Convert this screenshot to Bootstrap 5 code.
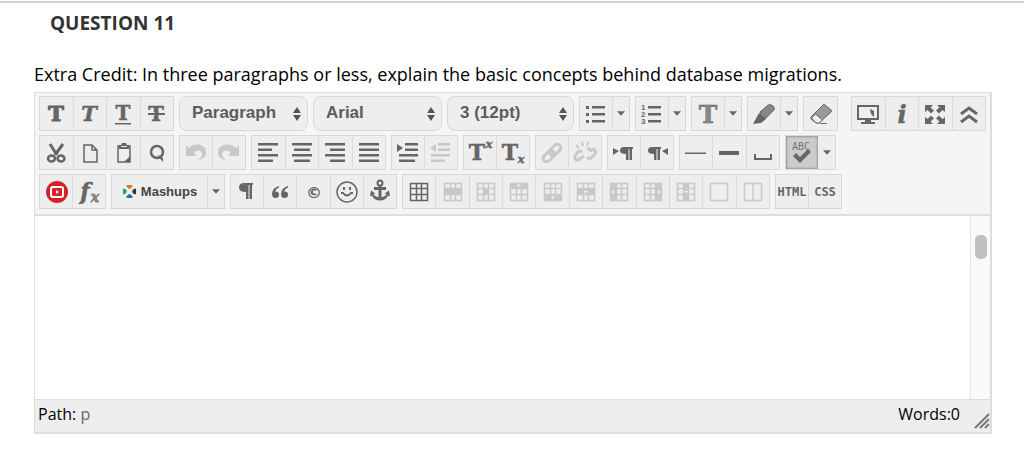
<!DOCTYPE html>
<html lang="en">
<head>
<meta charset="utf-8">
<meta name="viewport" content="width=device-width, initial-scale=1">
<title>Question 11</title>
<link href="https://cdn.jsdelivr.net/npm/bootstrap@5.3.0/dist/css/bootstrap.min.css" rel="stylesheet">
<style>
body{font-family:"Open Sans",sans-serif;color:#000;background:#fff}
.question{border-top:2px solid #d2d2d2;padding:0 32px 0 34px;margin-top:1px}
.question h1{font-size:19px;line-height:26px;font-weight:700;color:#333;margin:7px 0 25px 16px}
.prompt{font-size:18px;line-height:26px;margin:0 0 5px}
.editor{border:2px solid #ddd;border-top-width:1px;border-left-width:1px}
.tools{background:#f5f5f5;padding:3px 4px 5px;border-bottom:2px solid #ddd}
.rowline{display:flex;gap:5px;margin-bottom:4px}
.rowline:last-child{margin-bottom:0}
.grp{display:flex;border:1px solid #d8d8d8;background:#eee;height:35px;flex:none}
.grp button{flex:1 1 0;min-width:0;padding:0;border:0;border-left:1px solid #dcdcdc;border-radius:0;background:none;display:flex;align-items:center;justify-content:center;color:#666;line-height:1}
.grp button:first-child{border-left:0}
.grp button svg{width:32px;height:32px;flex:none;fill:currentColor;overflow:visible}
.grp button:disabled{color:#c8c8c8;opacity:1}
.g1{width:35px}.g2{width:67px}.g3{width:101px}.g4{width:135px}.g5{width:167px}.g11{width:368px}
.split{width:51px}
.grp button.caret{flex:0 0 17px}
.grp button.caret svg{width:8px;height:5px}
.mash{width:114px}
.mash .label{font:bold 13px "Liberation Sans",Arial,sans-serif;color:#444}
.mash button svg.logo{width:15px;height:15px;margin-right:4px}
.grp button.pressed{background:#ccc;box-shadow:inset 0 0 2px 1px #999}
.tools .form-select{width:129px;height:35px;flex:none;border:1px solid #d8d8d8;border-radius:8px;background-color:#eee;color:#5c5c5c;font:bold 17px "Liberation Sans",Arial,sans-serif;padding:0 20px 3px 12px;background-image:url("data:image/svg+xml,%3Csvg xmlns='http://www.w3.org/2000/svg' viewBox='0 0 8 16'%3E%3Cpath fill='%23555' d='M4 1 8 7H0zM4 15 0 9h8z'/%3E%3C/svg%3E");background-size:8px 16px;background-position:right 6px center}
.tools .form-select.size{width:127px}
.slab{font-family:"DejaVu Serif",serif;font-weight:bold;text-anchor:middle;stroke:currentColor;stroke-width:.5px}
.mono{font:bold 12px "DejaVu Sans Mono",monospace}
.line{fill:none;stroke:currentColor}
.area textarea{flex:1;height:183px;border:0;border-radius:0;resize:none;box-shadow:none}
.scroller{width:20px;background:#fafafa;border-left:1px solid #e4e4e4;padding:19px 0 0 4px}
.scroller span{display:block;width:12px;height:24px;border-radius:5px;background:#c1c1c1}
.status{border-top:1px solid #ddd;background:#eee;height:33px;font-size:16px;line-height:28px;padding:0 0 0 3px}
.status a{color:#666;text-decoration:none}
.status svg{width:16px;height:16px;margin:13px 0 0 14px}
</style>
</head>
<body>
<svg class="d-none" aria-hidden="true">
<symbol id="caret" viewBox="0 0 9 5"><path d="M0 0h9L4.500 5z"/></symbol>
<symbol id="grid" viewBox="0 0 32 32"><path class="line" stroke-width="1.500" d="M7.500 7.500h17v17h-17zM7.500 12.500h17M7.500 18.500h17M13.500 7.500v17M18.500 7.500v17"/></symbol>
<symbol id="bars" viewBox="0 0 32 32"><path d="M6 6h20v2.500H6zM6 17h20v2.500H6z"/></symbol>
</svg>
<main class="question">
<h1>QUESTION 11</h1>
<p class="prompt">Extra Credit: In three paragraphs or less, explain the basic concepts behind database migrations.</p>
<section class="editor">
<div class="tools" role="toolbar" aria-label="Text editor">
<div class="rowline">
 <div class="grp g4">
  <button title="Bold"><svg viewBox="0 0 32 32"><text class="slab" x="16" y="23" font-size="21" style="stroke-width:1.200px">T</text></svg></button>
  <button title="Italic"><svg viewBox="0 0 32 32"><text class="slab" x="15" y="23" font-size="21" font-style="italic">T</text></svg></button>
  <button title="Underline"><svg viewBox="0 0 32 32"><text class="slab" x="16" y="22" font-size="20">T</text><path d="M8 25h16v1.500H8z"/></svg></button>
  <button title="Strikethrough"><svg viewBox="0 0 32 32"><text class="slab" x="15" y="23" font-size="21">T</text><path d="M7 14h17v4H7z" fill="#eee"/><path d="M7 15h17v2H7z"/><path d="M13.500 14h4v4h-4z"/></svg></button>
 </div>
 <select class="form-select" aria-label="Format"><option>Paragraph</option></select>
 <select class="form-select" aria-label="Font family"><option>Arial</option></select>
 <select class="form-select size" aria-label="Font size"><option>3 (12pt)</option></select>
 <div class="grp split">
  <button title="Bullet list"><svg viewBox="0 0 32 32"><path d="M6 8h3v3H6zM6 15h3v3H6zM6 22h3v3H6zM12 8h13v2.500H12zM12 15h13v2.500H12zM12 22h13v2.500H12z"/></svg></button>
  <button class="caret" title="Bullet styles"><svg><use href="#caret"/></svg></button></div>
 <div class="grp split">
  <button title="Numbered list"><svg viewBox="0 0 32 32"><path d="M12 8h13v2.500H12zM12 15h13v2.500H12zM12 22h13v2.500H12z"/><g font-family="Liberation Sans" font-weight="bold" font-size="8"><text x="5" y="12">1</text><text x="5" y="19">2</text><text x="5" y="26">3</text></g></svg></button>
  <button class="caret" title="Number styles"><svg><use href="#caret"/></svg></button></div>
 <div class="grp split">
  <button title="Text color"><svg viewBox="0 0 32 32"><text class="slab" x="16" y="25" font-size="25" fill="#888">T</text></svg></button>
  <button class="caret" title="More text colors"><svg><use href="#caret"/></svg></button></div>
 <div class="grp split">
  <button title="Highlight color"><svg viewBox="0 0 32 32"><path d="m12 14 8-7q3-1 5 1t1 4l-8 8-4 .500z" fill="#888" stroke="#666"/><path d="m11 15 7 6-5 4-8 1z"/></svg></button>
  <button class="caret" title="More highlight colors"><svg><use href="#caret"/></svg></button></div>
 <div class="grp g1"><button title="Remove formatting"><svg viewBox="0 0 32 32"><path d="m6 19 12-12q1-1 2 0l6 5q1 1 0 2L14 25H11l-5-4z" fill="#999" stroke="#666"/><path d="m6.500 20 4-4 7 6-3.500 3h-3z" fill="#eee" stroke="#666"/><path d="M15 25h7v1h-7z"/></svg></button></div>
 <div class="grp g4 ms-auto">
  <button title="Preview"><svg viewBox="0 0 32 32"><path class="line" stroke-width="2" d="M6 8h20v13H6z"/><path d="M13 21h6v3h4v2H9v-2h4zM18 11l4 2v6l-3-3z"/></svg></button>
  <button title="Help"><svg viewBox="0 0 32 32"><text class="slab" x="16" y="25" font-size="24" font-style="italic">i</text></svg></button>
  <button title="Full screen"><svg viewBox="0 0 32 32"><path d="M6 7h8l-2.500 2.500 3.500 3-3 3-3.500-3.500L6 14zM26 7h-8l2.500 2.500-3.500 3 3 3 3.500-3.500L26 14zM6 26h8l-2.500-2.500 3.500-3-3-3L8.500 21 6 19zM26 26h-8l2.500-2.500-3.500-3 3-3 3.500 3.500L26 19z"/></svg></button>
  <button title="Show fewer"><svg viewBox="0 0 32 32"><path class="line" stroke-width="3" d="m8 16 8-6 8 6M8 24l8-6 8 6"/></svg></button>
 </div>
</div>
<div class="rowline">
 <div class="grp g4">
  <button title="Cut"><svg viewBox="0 0 32 32"><path class="line" stroke-width="3" d="M10 7l7 11M23 7l-8 11"/><g class="line" stroke-width="2.500"><ellipse cx="11.500" cy="21.500" rx="3.500" ry="3"/><ellipse cx="21" cy="21.500" rx="3.500" ry="3"/></g></svg></button>
  <button title="Copy"><svg viewBox="0 0 32 32"><path class="line" stroke-width="1.500" d="M10 8h8l5 5v12H10zM18 8v5h5"/></svg></button>
  <button title="Paste"><svg viewBox="0 0 32 32"><path class="line" stroke-width="1.500" d="M11 9h12v16H11z"/><path d="M12 8h2l1-2h4l1 2h2v4H12zM23 19v6h-6z"/><path d="M14 9h6v1h-6z" fill="#eee"/></svg></button>
  <button title="Find"><svg viewBox="0 0 32 32"><circle class="line" cx="16" cy="15" r="6" stroke-width="2.500"/><path d="m16 18 3 1 3 2v4z"/></svg></button>
 </div>
 <div class="grp g2">
  <button disabled title="Undo"><svg viewBox="0 0 32 32"><path d="M6 8l3 3c6-6 17-4 17 4 0 5-4 8-9 8 3-1 5-3 5-6 0-4-5-5-8-1l3 3H6z"/></svg></button>
  <button disabled title="Redo"><svg viewBox="0 0 32 32"><path d="M26 8l-3 3C17 5 5 7 5 15c0 5 4 8 8 8-2-1-4-3-4-6 0-4 6-5 9-1l-3 3h11z"/></svg></button>
 </div>
 <div class="grp g4">
  <button title="Align left"><svg viewBox="0 0 32 32"><use href="#bars"/><path d="M6 11.500h14V14H6zM6 22.500h15V25H6z"/></svg></button>
  <button title="Align center"><svg viewBox="0 0 32 32"><use href="#bars"/><path d="M8 11.500h16V14H8zM8 22.500h16V25H8z"/></svg></button>
  <button title="Align right"><svg viewBox="0 0 32 32"><use href="#bars"/><path d="M11 11.500h15V14H11zM11 22.500h15V25H11z"/></svg></button>
  <button title="Justify"><svg viewBox="0 0 32 32"><use href="#bars"/><path d="M6 11.500h20V14H6zM6 22.500h20V25H6z"/></svg></button>
 </div>
 <div class="grp g2">
  <button title="Indent"><svg viewBox="0 0 32 32"><path d="M5 7l6 4-6 4zM13 6h13v2.500H13zM13 11.500h13V14H13zM7 17h19v2.500H7zM7 22.500h16V25H7z"/></svg></button>
  <button disabled title="Outdent"><svg viewBox="0 0 32 32"><path d="M11 7l-6 4 6 4zM13 6h12v2.500H13zM13 11.500h12V14H13zM6 17h19v2.500H6zM6 22.500h14V25H6z"/></svg></button>
 </div>
 <div class="grp g2">
  <button title="Superscript"><svg viewBox="0 0 32 32"><text class="slab" x="13" y="23" font-size="22">T</text><text class="slab" x="25" y="11" font-size="11" font-style="italic">x</text></svg></button>
  <button title="Subscript"><svg viewBox="0 0 32 32"><text class="slab" x="13" y="23" font-size="22">T</text><text class="slab" x="24" y="26" font-size="11" font-style="italic">x</text></svg></button>
 </div>
 <div class="grp g2">
  <button disabled title="Link"><svg viewBox="0 0 32 32"><g class="line" stroke-width="3" transform="rotate(-45 16 16)"><rect x="5" y="12.500" width="13" height="7" rx="3.500"/><rect x="14" y="12.500" width="13" height="7" rx="3.500"/></g></svg></button>
  <button disabled title="Remove link"><svg viewBox="0 0 32 32"><path class="line" stroke-width="3" d="M13 15q-3-2-5 1l-2 3q-1 4 3 4l6-4M18 12q4-1 4 3M18 20q3 3 5 0l3-3q2-4-3-5"/><path class="line" stroke-width="2" d="m7 8 3 3M13 5l1 4M19 5l-1 4"/></svg></button>
 </div>
 <div class="grp g2">
  <button title="Left to right"><svg viewBox="0 0 32 32"><path d="M5 11l6 3-6 4zM16 10h9v2h-1v11h-2.500V12h-1v11H18v-6q-6 0-6-3.500T16 10z"/></svg></button>
  <button title="Right to left"><svg viewBox="0 0 32 32"><path d="M27 11l-6 3 6 4zM11 10h9v2h-1v11h-2.500V12h-1v11H13v-6q-6 0-6-3.500T11 10z"/></svg></button>
 </div>
 <div class="grp g3">
  <button title="Thin line"><svg viewBox="0 0 32 32"><path d="M5 15.500h21V17H5z"/></svg></button>
  <button title="Thick line"><svg viewBox="0 0 32 32"><path d="M6 14h20v4H6z"/></svg></button>
  <button title="Nonbreaking space"><svg viewBox="0 0 32 32"><path class="line" stroke-width="2" d="M8 17v5h16v-5"/></svg></button>
 </div>
 <div class="grp split">
  <button class="pressed" title="Spell check"><svg viewBox="0 0 32 32"><text x="6" y="13" font-family="DejaVu Sans Mono" font-size="10" fill="#777">ABC</text><path d="m7 19 3-3 4 4 8-8 3 3-11 11z"/></svg></button>
  <button class="caret border-0" title="Spelling language"><svg><use href="#caret"/></svg></button></div>
</div>
<div class="rowline">
 <div class="grp g2">
  <button title="Record from webcam"><svg viewBox="0 0 32 32"><circle cx="17" cy="16" r="11" fill="#d3222a"/><rect x="11" y="11" width="12" height="10" rx="2" fill="#d3222a" stroke="#fff" stroke-width="2"/><path d="m16 14 3 2-3 2z" fill="#fff"/></svg></button>
  <button title="Math editor"><svg viewBox="0 0 32 32"><text x="12" y="23" class="slab" font-size="22" font-style="italic">f</text><text x="22" y="26" class="slab" font-size="14" font-style="italic" fill="#888">x</text></svg></button>
 </div>
 <div class="grp mash">
  <button title="Mashups"><svg class="logo" viewBox="0 0 16 16"><path fill="#e17626" d="M5 1h6v2L9 5H7L5 3z"/><path fill="#333" d="M13 5h2v6h-2l-2-2V7z"/><path fill="#1377a9" d="M5 15h6v-2l-2-2H7l-2 2z"/><path fill="#2ca36b" d="M3 5H1v6h2l2-2V7z"/></svg><span class="label">Mashups</span></button>
  <button class="caret" title="More mashups"><svg><use href="#caret"/></svg></button>
 </div>
 <div class="grp g5">
  <button title="Show paragraph marks"><svg viewBox="0 0 32 32"><path d="M13 7h9v2h-1v14h-2.500V9h-1v14H15v-7q-7 0-7-4.500T13 7z"/></svg></button>
  <button title="Block quote"><svg viewBox="0 0 32 32"><path d="M15 10q-7 2-7 8 0 4 3.500 4t3.500-3.500T11 15.500q1-3 4-4zM24 10q-7 2-7 8 0 4 3.500 4t3.500-3.500-4-3q1-3 4-4z"/></svg></button>
  <button title="Copyright symbol"><svg viewBox="0 0 32 32"><text x="16" y="22" text-anchor="middle" font-family="DejaVu Sans" font-weight="bold" font-size="16">©</text></svg></button>
  <button title="Emoticons"><svg viewBox="0 0 32 32"><circle class="line" cx="16" cy="16" r="10" stroke-width="1.500"/><path d="M12 11h2v3h-2zM18 11h2v3h-2z"/><path class="line" stroke-width="2" d="M10 17h2q4 5 8 0h2"/></svg></button>
  <button title="Anchor"><svg viewBox="0 0 32 32"><circle class="line" cx="16" cy="7" r="2.500" stroke-width="2"/><path d="M14.500 9h3v2H22v3h-4.500v7q4-.500 5-3l-2-.500 4.500-3 1 6-2-1q-2 5-8 5t-8-5l-2 1 1-6 4.500 3-2 .500q1 2.500 5 3v-7H10v-3h4.500z"/></svg></button>
 </div>
 <div class="grp g11">
  <button title="Table"><svg><use href="#grid"/></svg></button>
  <button disabled title="Row properties"><svg viewBox="0 0 32 32"><use href="#grid"/><path d="M7 12h18v7H7z"/></svg></button>
  <button disabled title="Cell properties"><svg viewBox="0 0 32 32"><use href="#grid"/><path d="M13 12h6v7h-6z"/></svg></button>
  <button disabled title="Insert row before"><svg viewBox="0 0 32 32"><use href="#grid"/><path d="M7 7h18v5.500H7z"/><path d="M14 9h4v1h-4zM15.500 8h1v3h-1z" fill="#eee"/></svg></button>
  <button disabled title="Insert row after"><svg viewBox="0 0 32 32"><use href="#grid"/><path d="M7 18.500h18V25H7z"/><path d="M14 21h4v1h-4zM15.500 20h1v3.500h-1z" fill="#eee"/></svg></button>
  <button disabled title="Delete row"><svg viewBox="0 0 32 32"><use href="#grid"/><path d="M7 12h18v7H7z"/><path d="M14 15h4v1.500h-4z" fill="#eee"/></svg></button>
  <button disabled title="Insert column before"><svg viewBox="0 0 32 32"><use href="#grid"/><path d="M7 7h6v18H7z"/><path d="M8 15.500h4v1H8zM9.500 14h1v4h-1z" fill="#eee"/></svg></button>
  <button disabled title="Insert column after"><svg viewBox="0 0 32 32"><use href="#grid"/><path d="M19 7h6v18h-6z"/><path d="M20 15.500h4v1h-4zM21.500 14h1v4h-1z" fill="#eee"/></svg></button>
  <button disabled title="Delete column"><svg viewBox="0 0 32 32"><use href="#grid"/><path d="M13 7h6v18h-6z"/><path d="M14 15h4v1.500h-4z" fill="#eee"/></svg></button>
  <button disabled title="Merge cells"><svg viewBox="0 0 32 32"><path class="line" stroke-width="1.500" d="M7.500 7.500h17v17h-17z"/></svg></button>
  <button disabled title="Split cells"><svg viewBox="0 0 32 32"><path class="line" stroke-width="1.500" d="M7.500 7.500h17v17h-17zM16 7.500v17"/></svg></button>
 </div>
 <div class="grp g2"><button class="mono" title="HTML code">HTML</button><button class="mono" title="CSS code">CSS</button></div>
</div>
</div>
<div class="area d-flex">
 <textarea class="form-control" aria-label="Answer"></textarea>
 <div class="scroller"><span></span></div>
</div>
<div class="status d-flex">
 <div>Path: <a href="#">p</a></div>
 <div class="ms-auto">Words:0</div>
 <svg class="me-1px" viewBox="0 0 16 16" fill="none" stroke="#777" stroke-width="2" aria-hidden="true"><path d="M1 15 15 1M6 15l9-9M11 15l4-4"/></svg>
</div>
</section>
</main>
<script src="https://cdn.jsdelivr.net/npm/bootstrap@5.3.0/dist/js/bootstrap.bundle.min.js"></script>
</body>
</html>
